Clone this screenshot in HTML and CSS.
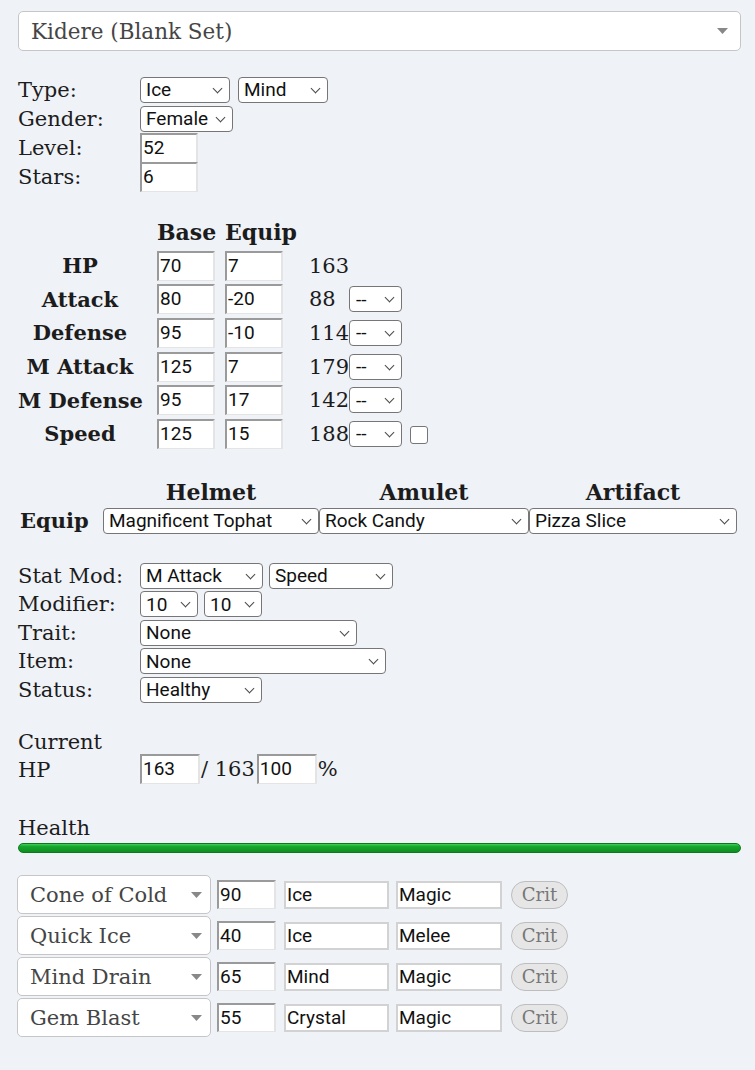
FILE: index.html
```html
<!DOCTYPE html>
<html lang="en">
<head>
<meta charset="utf-8">
<title>Kidere (Blank Set)</title>
<link rel="stylesheet" href="styles.css">
</head>
<body>
<div class="page">
  <div class="bigsel setsel">
    <span class="bigsel-text">Kidere (Blank Set)</span>
    <svg class="tri" width="11" height="6" viewBox="0 0 11 6"><path d="M0 0H11L5.5 6Z"/></svg>
  </div>

  <div class="info">
    <div class="lbl">Type:</div>
    <div class="ctl"><span class="sw"><select class="s w90"><option>Ice</option></select></span><span class="sw ml8"><select class="s w90"><option>Mind</option></select></span></div>
    <div class="lbl">Gender:</div>
    <div class="ctl"><span class="sw"><select class="s w93"><option>Female</option></select></span></div>
    <div class="lbl">Level:</div>
    <div class="ctl"><input class="in w58" value="52"></div>
    <div class="lbl">Stars:</div>
    <div class="ctl"><input class="in w58" value="6"></div>
  </div>

  <div class="stats">
    <div></div><div class="th">Base</div><div class="th">Equip</div><div></div><div></div><div></div>

    <div class="sl">HP</div><div><input class="in w58" value="70"></div><div><input class="in w58" value="7"></div><div class="sv">163</div><div></div><div></div>

    <div class="sl">Attack</div><div><input class="in w58" value="80"></div><div><input class="in w58" value="-20"></div><div class="sv">88</div><div><span class="sw"><select class="s w53"><option>--</option></select></span></div><div></div>

    <div class="sl">Defense</div><div><input class="in w58" value="95"></div><div><input class="in w58" value="-10"></div><div class="sv">114</div><div><span class="sw"><select class="s w53"><option>--</option></select></span></div><div></div>

    <div class="sl">M Attack</div><div><input class="in w58" value="125"></div><div><input class="in w58" value="7"></div><div class="sv">179</div><div><span class="sw"><select class="s w53"><option>--</option></select></span></div><div></div>

    <div class="sl">M Defense</div><div><input class="in w58" value="95"></div><div><input class="in w58" value="17"></div><div class="sv">142</div><div><span class="sw"><select class="s w53"><option>--</option></select></span></div><div></div>

    <div class="sl">Speed</div><div><input class="in w58" value="125"></div><div><input class="in w58" value="15"></div><div class="sv">188</div><div><span class="sw"><select class="s w53"><option>--</option></select></span></div><div><input type="checkbox" class="cb"></div>
  </div>

  <div class="equip">
    <div></div><div class="th">Helmet</div><div class="th">Amulet</div><div class="th">Artifact</div>
    <div class="el">Equip</div>
    <div><span class="sw full"><select class="s full"><option>Magnificent Tophat</option></select></span></div>
    <div><span class="sw full"><select class="s full"><option>Rock Candy</option></select></span></div>
    <div><span class="sw full"><select class="s full"><option>Pizza Slice</option></select></span></div>
  </div>

  <div class="info2">
    <div class="lbl">Stat Mod:</div>
    <div class="ctl"><span class="sw"><select class="s w123"><option>M Attack</option></select></span><span class="sw ml6"><select class="s w124"><option>Speed</option></select></span></div>
    <div class="lbl">Modifier:</div>
    <div class="ctl"><span class="sw"><select class="s w58"><option>10</option></select></span><span class="sw ml6"><select class="s w58"><option>10</option></select></span></div>
    <div class="lbl">Trait:</div>
    <div class="ctl"><span class="sw"><select class="s w217"><option>None</option></select></span></div>
    <div class="lbl">Item:</div>
    <div class="ctl"><span class="sw"><select class="s w246"><option>None</option></select></span></div>
    <div class="lbl">Status:</div>
    <div class="ctl"><span class="sw"><select class="s w122"><option>Healthy</option></select></span></div>
  </div>

  <div class="curhp">
    <div class="lbl">Current<br>HP</div>
    <div class="ctl hpline"><input class="in w60" value="163"><span class="slash">/ 163</span><input class="in w60" value="100"><span class="pct">%</span></div>
  </div>

  <div class="health">
    <div class="htitle">Health</div>
    <div class="bar"></div>
  </div>

  <div class="moves">
    <div class="move">
      <div class="bigsel msel"><span class="bigsel-text">Cone of Cold</span><svg class="tri" width="11" height="6" viewBox="0 0 11 6"><path d="M0 0H11L5.5 6Z"/></svg></div>
      <input class="in pw" value="90"><input class="tx mt" value="Ice"><input class="tx mc" value="Magic"><button class="crit">Crit</button>
    </div>
    <div class="move">
      <div class="bigsel msel"><span class="bigsel-text">Quick Ice</span><svg class="tri" width="11" height="6" viewBox="0 0 11 6"><path d="M0 0H11L5.5 6Z"/></svg></div>
      <input class="in pw" value="40"><input class="tx mt" value="Ice"><input class="tx mc" value="Melee"><button class="crit">Crit</button>
    </div>
    <div class="move">
      <div class="bigsel msel"><span class="bigsel-text">Mind Drain</span><svg class="tri" width="11" height="6" viewBox="0 0 11 6"><path d="M0 0H11L5.5 6Z"/></svg></div>
      <input class="in pw" value="65"><input class="tx mt" value="Mind"><input class="tx mc" value="Magic"><button class="crit">Crit</button>
    </div>
    <div class="move">
      <div class="bigsel msel"><span class="bigsel-text">Gem Blast</span><svg class="tri" width="11" height="6" viewBox="0 0 11 6"><path d="M0 0H11L5.5 6Z"/></svg></div>
      <input class="in pw" value="55"><input class="tx mt" value="Crystal"><input class="tx mc" value="Magic"><button class="crit">Crit</button>
    </div>
  </div>
</div>
</body>
</html>
```
FILE: styles.css
```css
html, body {
  margin: 0;
  padding: 0;
  background: #eff2f7;
}
.page {
  padding: 11px 14px 0 18px;
  font-family: "DejaVu Serif", serif;
  font-size: 21px;
  color: #1c1c1c;
}
.bigsel {
  display: flex;
  align-items: center;
  justify-content: space-between;
  background: #fff;
  border: 1px solid #c6c6c6;
  border-radius: 5px;
  box-sizing: border-box;
  color: #454545;
}
.setsel {
  height: 40px;
  padding: 0 12px 0 12px;
  font-size: 21.5px;
}
.tri { fill: #888; flex: none; }

.info, .info2, .curhp {
  display: grid;
  grid-template-columns: 122px auto;
}
.info { margin-top: 24px; grid-auto-rows: 29px; }
.info2 { margin-top: 26px; grid-auto-rows: 28.5px; }
.lbl { display: flex; align-items: center; white-space: nowrap; }
.ctl { display: flex; align-items: center; }

.sw {
  position: relative;
  display: inline-block;
  height: 26px;
}
.sw::after {
  content: "";
  position: absolute;
  right: 9px;
  top: 8px;
  width: 6px;
  height: 6px;
  border-right: 1.4px solid #4a4a4a;
  border-bottom: 1.4px solid #4a4a4a;
  transform: rotate(45deg);
  pointer-events: none;
}
select.s {
  -webkit-appearance: none;
  appearance: none;
  font-family: Roboto, sans-serif;
  font-size: 19px;
  height: 26px;
  padding: 0 18px 0 5px;
  border: 1px solid #767676;
  border-radius: 4px;
  background-color: #fff;
  color: #111;
  box-sizing: border-box;
  display: block;
  margin: 0;
}
.ml8 { margin-left: 8px; }
.ml6 { margin-left: 6px; }
.w53 { width: 53px; }
.w58 { width: 58px; }
.w60 { width: 60px; }
.w90 { width: 90px; }
.w93 { width: 93px; }
.w122 { width: 122px; }
.w123 { width: 123px; }
.w124 { width: 124px; }
.w217 { width: 217px; }
.w246 { width: 246px; }
.full { width: 100%; }
select.w53 { padding-left: 6px; }

input.in {
  font-family: Roboto, sans-serif;
  font-size: 19px;
  height: 30px;
  box-sizing: border-box;
  padding: 0 2px 2px 1px;
  border-style: solid;
  border-width: 2px 2px 1px 2px;
  border-color: #9a9a9a #e4e4e4 #e4e4e4 #9a9a9a;
  background: #fff;
  color: #111;
  margin: 0;
}

.stats {
  margin-top: 26px;
  display: grid;
  grid-template-columns: 139px 68px 58px 66px 57px auto;
  grid-template-rows: 32px repeat(6, 33.6px);
  align-items: center;
}
.th {
  font-weight: bold;
  font-size: 22px;
  white-space: nowrap;
}
.stats .th { align-self: start; line-height: 30px; }
.sl {
  font-weight: bold;
  text-align: center;
  padding-right: 15px;
  white-space: nowrap;
  font-size: 21px;
}
.sv { padding-left: 26px; }
.cb {
  -webkit-appearance: none;
  appearance: none;
  width: 18px;
  height: 18px;
  margin: 2px 0 0 4px;
  display: block;
  border: 1px solid #767676;
  border-radius: 3px;
  background: #fff;
  box-sizing: border-box;
}

.equip {
  margin-top: 27px;
  display: grid;
  grid-template-columns: 85px 216px 210px 208px;
  grid-template-rows: 28px 30px;
  align-items: center;
}
.equip .th { text-align: center; }
.el { font-weight: bold; font-size: 21px; padding-left: 2px; }

.curhp { margin-top: 24px; }
.curhp .lbl { line-height: 28px; display: block; }
.hpline { align-self: end; padding-bottom: 0; }
.slash { margin: 0 2px 0 1px; }
.pct { margin-left: 1px; }

.health { margin-top: 30px; }
.htitle { line-height: 28px; }
.bar {
  margin-top: 1px;
  height: 10px;
  border-radius: 5px;
  box-sizing: border-box;
  border: 1px solid #0b7a1c;
  background: linear-gradient(#3fd05a 0, #17a82e 30%, #0f8c22 100%);
  width: 723px;
}

.moves { margin-top: 22px; display: flex; flex-direction: column; gap: 2px; margin-left: -1px; }
.move { display: flex; align-items: center; height: 39px; }
.msel {
  width: 194px;
  height: 39px;
  padding: 0 8px 0 12px;
  font-size: 21px;
}
.pw { width: 59px; margin-left: 6px !important; height: 29px !important; }
input.tx {
  font-family: Roboto, sans-serif;
  font-size: 19px;
  height: 28px;
  box-sizing: border-box;
  border: 2px solid #d2d2d2;
  background: #fff;
  padding: 0 1px 1px 1px;
  color: #111;
  margin: 0;
}
.mt { width: 105px; margin-left: 8px !important; }
.mc { width: 106px; margin-left: 7px !important; }
.crit {
  margin-left: 9px;
  width: 57px;
  height: 28px;
  border-radius: 14px;
  border: 1px solid #bdbdbd;
  background: #e6e6e6;
  color: #777;
  font-family: "DejaVu Serif", serif;
  font-size: 18px;
  padding: 0;
}
```
